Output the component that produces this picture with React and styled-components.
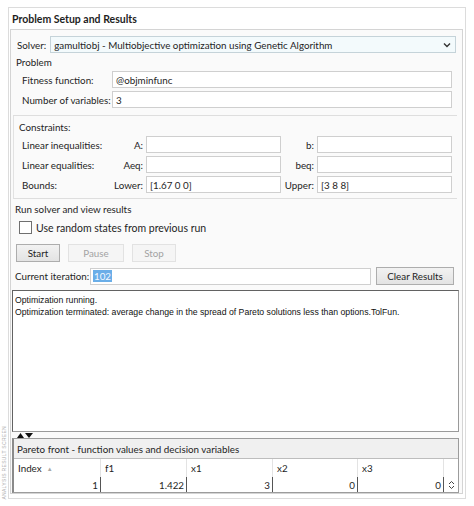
import React from "react";
import styled, { createGlobalStyle } from "styled-components";

const GlobalStyle = createGlobalStyle`
  html, body {
    margin: 0;
    padding: 0;
    background: #ffffff;
  }
  body {
    font-family: Lato, "Open Sans", sans-serif;
    font-size: 9.8px;
    color: #1e1e1e;
    white-space: nowrap;
  }
`;

const App = () => {
  return (
    <>
      <GlobalStyle />
      <Page>
        <Gutter>
          <Watermark>ANALYSIS RESULT SCREEN</Watermark>
        </Gutter>
        <Frame>
          <Title>Problem Setup and Results</Title>
          <Inner>
            <SolverRow>
              <span>Solver:</span>
              <Dropdown>
                <span>gamultiobj - Multiobjective optimization using Genetic Algorithm</span>
                <Chevron viewBox="0 0 8 6">
                  <path d="M1 1.5 L4 4.5 L7 1.5" fill="none" stroke="#333" strokeWidth="1.4" />
                </Chevron>
              </Dropdown>
            </SolverRow>

            <SectionLabel>Problem</SectionLabel>
            <ProblemGrid>
              <span>Fitness function:</span>
              <Field>@objminfunc</Field>
              <span>Number of variables:</span>
              <Field>3</Field>
            </ProblemGrid>

            <Constraints>
              <SectionLabel>Constraints:</SectionLabel>
              <ConstraintGrid>
                <span>Linear inequalities:</span>
                <Key>A:</Key>
                <Field />
                <Key>b:</Key>
                <Field />

                <span>Linear equalities:</span>
                <Key>Aeq:</Key>
                <Field />
                <Key>beq:</Key>
                <Field />

                <span>Bounds:</span>
                <Key>Lower:</Key>
                <Field>[1.67 0 0]</Field>
                <Key>Upper:</Key>
                <Field>[3 8 8]</Field>
              </ConstraintGrid>
            </Constraints>

            <RunLabel>Run solver and view results</RunLabel>
            <CheckRow>
              <Box />
              <span>Use random states from previous run</span>
            </CheckRow>

            <ButtonRow>
              <Button>Start</Button>
              <Button disabled>Pause</Button>
              <Button disabled>Stop</Button>
            </ButtonRow>

            <IterRow>
              <IterLabel>Current iteration:</IterLabel>
              <IterField>
                <Selected>102</Selected>
              </IterField>
              <Button $wide>Clear Results</Button>
            </IterRow>

            <Output>
              <div>Optimization running.</div>
              <div>
                Optimization terminated: average change in the spread of Pareto solutions less than
                options.TolFun.
              </div>
            </Output>

            <Splitter>
              <svg width="16" height="5" viewBox="0 0 16 5">
                <path d="M0 5 L3.5 0 L7 5 Z" fill="#111" />
                <path d="M8 0 L16 0 L12 5 Z" fill="#111" />
              </svg>
            </Splitter>

            <Pareto>
              <ParetoHead>Pareto front - function values and decision variables</ParetoHead>
              <Table>
                <HeadCell>
                  Index <SortMark>▲</SortMark>
                </HeadCell>
                <HeadCell>f1</HeadCell>
                <HeadCell>x1</HeadCell>
                <HeadCell>x2</HeadCell>
                <HeadCell>x3</HeadCell>
                <HeadCell $last />

                <DataCell>1</DataCell>
                <DataCell>1.422</DataCell>
                <DataCell>3</DataCell>
                <DataCell>0</DataCell>
                <DataCell>0</DataCell>
                <SpinCell>
                  <svg width="7" height="10" viewBox="0 0 7 10">
                    <path d="M1 4 L3.5 1.5 L6 4" fill="none" stroke="#444" strokeWidth="1" />
                    <path d="M1 6 L3.5 8.5 L6 6" fill="none" stroke="#444" strokeWidth="1" />
                  </svg>
                </SpinCell>
              </Table>
            </Pareto>
          </Inner>
        </Frame>
      </Page>
    </>
  );
};

const Page = styled.div`
  display: flex;
  padding-top: 7px;
  width: 474px;
  height: 506px;
  box-sizing: border-box;
`;

const Gutter = styled.div`
  width: 8px;
  display: flex;
  align-items: flex-end;
  justify-content: center;
  padding-bottom: 6px;
`;

const Watermark = styled.div`
  writing-mode: vertical-rl;
  transform: rotate(180deg);
  font-family: "Liberation Sans", sans-serif;
  font-size: 5px;
  letter-spacing: 0.3px;
  color: #a9a9a9;
`;

const Frame = styled.div`
  width: 458px;
  height: 492px;
  box-sizing: border-box;
  border: 1px solid #dcdcdc;
  display: flex;
  flex-direction: column;
`;

const Title = styled.div`
  font-weight: 700;
  font-size: 10.5px;
  padding: 5px 3px 0;
  height: 21px;
  flex: none;
  box-sizing: border-box;
`;

const Inner = styled.div`
  flex: 1;
  margin: 0 2px 4px 1px;
  border: 1px solid #d4d4d4;
  background: #fafafa;
  display: flex;
  flex-direction: column;
  padding: 6px 0 0 0;
`;

const SolverRow = styled.div`
  display: flex;
  align-items: center;
  gap: 4px;
  padding: 0 6px 0 6px;
  height: 17px;
  flex: none;
`;

const Dropdown = styled.div`
  flex: 1;
  height: 17px;
  box-sizing: border-box;
  border: 1px solid #c5d3d9;
  background: #f3fafc;
  display: flex;
  align-items: center;
  justify-content: space-between;
  padding: 0 4px 0 3px;
`;

const Chevron = styled.svg`
  width: 8px;
  height: 6px;
`;

const SectionLabel = styled.div`
  height: 14px;
  flex: none;
  display: flex;
  align-items: center;
  padding-left: 5px;
  margin-top: 2px;
`;

const ProblemGrid = styled.div`
  display: grid;
  grid-template-columns: 90px 340px;
  grid-auto-rows: 17px;
  row-gap: 3px;
  align-items: center;
  padding: 2px 0 7px 9px;
  border-bottom: 1px solid #dedede;
  margin: 0 5px 0 2px;
`;

const Field = styled.div`
  height: 17px;
  box-sizing: border-box;
  border: 1px solid #cfcfcf;
  background: #ffffff;
  display: flex;
  align-items: center;
  padding-left: 3px;
  overflow: hidden;
`;

const Constraints = styled.div`
  margin: 0 5px 0 2px;
  border-left: 1px solid #e2e2e2;
  border-bottom: 1px solid #dedede;
  padding: 2px 0 5px 0;
`;

const ConstraintGrid = styled.div`
  display: grid;
  grid-template-columns: 84px 40px 135px 36px 135px;
  grid-auto-rows: 17px;
  row-gap: 3px;
  align-items: center;
  padding: 2px 0 0 8px;
`;

const Key = styled.span`
  text-align: right;
  padding-right: 3px;
`;

const RunLabel = styled.div`
  padding: 4px 0 0 4px;
  height: 16px;
  flex: none;
  box-sizing: border-box;
`;

const CheckRow = styled.div`
  display: flex;
  align-items: center;
  gap: 4px;
  padding: 6px 0 0 8px;
  font-size: 10.5px;
  flex: none;
`;

const Box = styled.div`
  width: 11px;
  height: 11px;
  border: 1px solid #6f6f6f;
  background: #fff;
`;

const ButtonRow = styled.div`
  display: flex;
  gap: 8px;
  padding: 10px 0 0 5px;
  flex: none;
`;

const Button = styled.div`
  height: 18px;
  box-sizing: border-box;
  min-width: ${(p) => (p.$wide ? "78px" : "44px")};
  padding: 0 ${(p) => (p.$wide ? "6px" : "10px")};
  display: flex;
  align-items: center;
  justify-content: center;
  border: 1px solid ${(p) => (p.disabled ? "#e2e2e2" : "#adadad")};
  background: ${(p) =>
    p.disabled ? "#f5f5f5" : "linear-gradient(#f2f2f2, #e3e3e3)"};
  color: ${(p) => (p.disabled ? "#a3a3a3" : "#1e1e1e")};
  &:nth-child(2) {
    min-width: 56px;
  }
`;

const IterRow = styled.div`
  display: flex;
  align-items: center;
  padding: 5px 6px 0 4px;
  flex: none;
`;

const IterLabel = styled.span`
  width: 75px;
`;

const IterField = styled(Field)`
  width: 281px;
  padding-left: 2px;
  margin-right: 5px;
`;

const Selected = styled.span`
  background: #6aaee8;
  color: #f4f9ff;
  padding: 0 1px;
`;

const Output = styled.div`
  margin: 5px 3px 0 1px;
  height: 142px;
  flex: none;
  box-sizing: border-box;
  border: 1px solid #9a9a9a;
  border-top-color: #626262;
  border-left-color: #626262;
  background: #fff;
  padding: 3px 2px;
  font-family: "Liberation Sans", sans-serif;
  font-size: 8.7px;
  line-height: 12px;
  color: #111;
`;

const Splitter = styled.div`
  height: 6px;
  flex: none;
  display: flex;
  align-items: flex-end;
  padding-left: 6px;
`;

const Pareto = styled.div`
  margin: 0 3px 0 1px;
  border: 1px solid #9c9c9c;
  border-left: 2px solid #8a8a8a;
  background: #fff;
  flex: none;
`;

const ParetoHead = styled.div`
  height: 20px;
  box-sizing: border-box;
  display: flex;
  align-items: center;
  padding-left: 3px;
  background: #f0f0f0;
  border-bottom: 1px solid #bdbdbd;
`;

const Table = styled.div`
  display: grid;
  grid-template-columns: 87px 86px 86px 85px 86px 1fr;
`;

const HeadCell = styled.div`
  height: 18px;
  display: flex;
  align-items: center;
  padding-left: ${(p) => (p.$last ? "0" : "4px")};
  border-right: ${(p) => (p.$last ? "none" : "1px solid #e3e3e3")};
`;

const SortMark = styled.span`
  font-size: 6px;
  color: #a8a8a8;
  margin-left: 5px;
`;

const DataCell = styled.div`
  height: 15px;
  display: flex;
  align-items: center;
  justify-content: flex-end;
  padding-right: 2px;
  border-right: 1px solid #555;
`;

const SpinCell = styled.div`
  display: flex;
  align-items: center;
  padding-left: 4px;
`;

export default App;
